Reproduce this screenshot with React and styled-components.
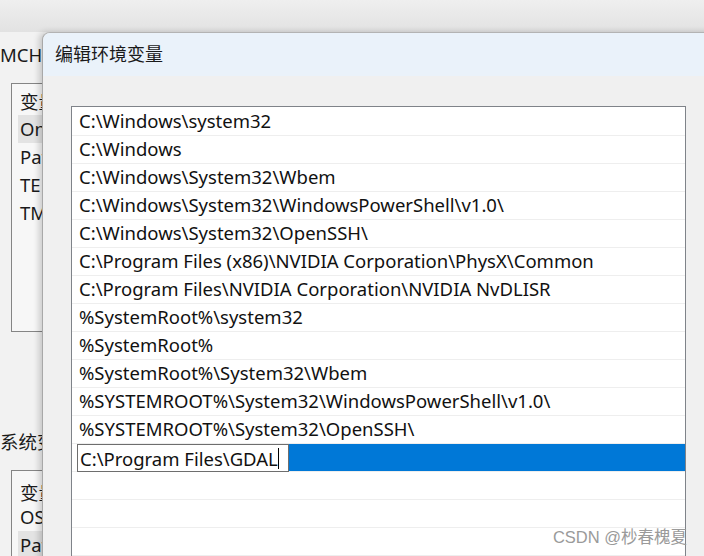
import React from "react";
import styled, { createGlobalStyle } from "styled-components";

const paths = [
  "C:\\Windows\\system32",
  "C:\\Windows",
  "C:\\Windows\\System32\\Wbem",
  "C:\\Windows\\System32\\WindowsPowerShell\\v1.0\\",
  "C:\\Windows\\System32\\OpenSSH\\",
  "C:\\Program Files (x86)\\NVIDIA Corporation\\PhysX\\Common",
  "C:\\Program Files\\NVIDIA Corporation\\NVIDIA NvDLISR",
  "%SystemRoot%\\system32",
  "%SystemRoot%",
  "%SystemRoot%\\System32\\Wbem",
  "%SYSTEMROOT%\\System32\\WindowsPowerShell\\v1.0\\",
  "%SYSTEMROOT%\\System32\\OpenSSH\\",
];

const userVars = ["On", "Pat", "TE", "TM"];

const App = () => {
  return (
    <>
      <GlobalStyle />
      <Desktop>
        <BackWindow>
          <TopStrip />
          <SectionLabel $top={11}>MCH</SectionLabel>
          <BackList $height={249} $pad={4}>
            <BackHeader $height={27}>变量</BackHeader>
            {userVars.map((v, i) => (
              <BackItem key={v} $selected={i === 0}>
                {v}
              </BackItem>
            ))}
          </BackList>
          <SectionLabel $top={98}>系统变</SectionLabel>
          <BackList $height={120} $pad={11}>
            <BackHeader $height={21}>变量</BackHeader>
            <BackItem>OS</BackItem>
            <BackItem $selected>Pat</BackItem>
          </BackList>
        </BackWindow>

        <Dialog>
          <TitleBar>编辑环境变量</TitleBar>
          <DialogBody>
            <ListBox>
              {paths.map((p) => (
                <Row key={p}>{p}</Row>
              ))}
              <EditRow>
                <EditBox>
                  C:\Program Files\GDAL
                  <Caret />
                </EditBox>
                <Highlight />
              </EditRow>
              <Row />
              <Row />
              <Row />
            </ListBox>
          </DialogBody>
        </Dialog>

        <Watermark>CSDN @杪春槐夏</Watermark>
      </Desktop>
    </>
  );
};

const GlobalStyle = createGlobalStyle`
  html, body {
    margin: 0;
    padding: 0;
    overflow: hidden;
    background: #f0f0f0;
  }
  body {
    font-family: "Noto Sans", "Noto Sans CJK SC", sans-serif;
  }
`;

const Desktop = styled.div`
  position: relative;
  width: 704px;
  height: 556px;
  overflow: hidden;
  background: #f0f0f0;
`;

const BackWindow = styled.div`
  display: flex;
  flex-direction: column;
  height: 100%;
  overflow: hidden;
  background: #f2f2f2;
  > * {
    flex-shrink: 0;
  }
`;

const TopStrip = styled.div`
  height: 32px;
  background: linear-gradient(#efefef, #e2e2e2);
`;

const SectionLabel = styled.div`
  margin-top: ${({ $top }) => $top}px;
  height: 24px;
  line-height: 24px;
  font-size: 18.5px;
  color: #1a1a1a;
  white-space: nowrap;
`;

const BackList = styled.div`
  margin: 16px 0 0 11px;
  width: 120px;
  height: ${({ $height }) => $height}px;
  border: 1px solid #858585;
  background: #f7f7f7;
  padding: ${({ $pad }) => $pad}px 0 0 6px;
  box-sizing: border-box;
  display: flex;
  flex-direction: column;
  overflow: hidden;
`;

const BackHeader = styled.div`
  height: ${({ $height }) => $height}px;
  line-height: ${({ $height }) => $height}px;
  padding-left: 2px;
  font-size: 18.5px;
  color: #1a1a1a;
  flex-shrink: 0;
`;

const BackItem = styled.div`
  height: 28px;
  line-height: 28px;
  padding-left: 2px;
  font-size: 18.5px;
  color: #1a1a1a;
  flex-shrink: 0;
  background: ${({ $selected }) => ($selected ? "#e3e3e3" : "transparent")};
`;

const Dialog = styled.div`
  position: absolute;
  left: 42px;
  top: 32px;
  width: 700px;
  height: 560px;
  display: flex;
  flex-direction: column;
  background: #f0f0f0;
  border-top: 1px solid #b3b3b3;
  border-left: 1px solid #a8a8a8;
  border-top-left-radius: 8px;
  box-shadow: -3px 0 6px rgba(0, 0, 0, 0.18);
  overflow: hidden;
`;

const TitleBar = styled.div`
  height: 43px;
  line-height: 41px;
  padding-left: 12px;
  background: #eaf2fa;
  font-family: "Noto Sans CJK SC", sans-serif;
  font-size: 18px;
  color: #1a1a1a;
  flex-shrink: 0;
`;

const DialogBody = styled.div`
  flex: 1;
  padding: 30px 0 0 28px;
`;

const ListBox = styled.div`
  width: 615px;
  box-sizing: border-box;
  border: 1px solid #7f8389;
  background: #fff;
  padding-top: 1px;
  display: flex;
  flex-direction: column;
`;

const Row = styled.div`
  height: 28px;
  box-sizing: border-box;
  border-bottom: 1px solid #eeeeee;
  padding-left: 7px;
  font-size: 18.5px;
  line-height: 26px;
  color: #111;
  white-space: nowrap;
  flex-shrink: 0;
`;

const EditRow = styled.div`
  height: 28px;
  box-sizing: border-box;
  display: flex;
  padding-left: 5px;
  border-bottom: 1px solid #eeeeee;
  flex-shrink: 0;
`;

const EditBox = styled.div`
  width: 212px;
  height: 28px;
  box-sizing: border-box;
  border: 1px solid #6e6e6e;
  background: #fff;
  padding-left: 2px;
  font-size: 18.5px;
  line-height: 25px;
  color: #111;
  white-space: nowrap;
  display: flex;
  align-items: center;
  position: relative;
  z-index: 1;
`;

const Caret = styled.span`
  display: inline-block;
  width: 1px;
  height: 21px;
  background: #000;
`;

const Highlight = styled.div`
  flex: 1;
  height: 27px;
  background: #0078d7;
`;

const Watermark = styled.div`
  position: absolute;
  right: 17px;
  bottom: 8px;
  font-family: "Liberation Sans", "Noto Sans CJK SC", sans-serif;
  font-size: 16.5px;
  color: #9a9a9a;
`;

export default App;
